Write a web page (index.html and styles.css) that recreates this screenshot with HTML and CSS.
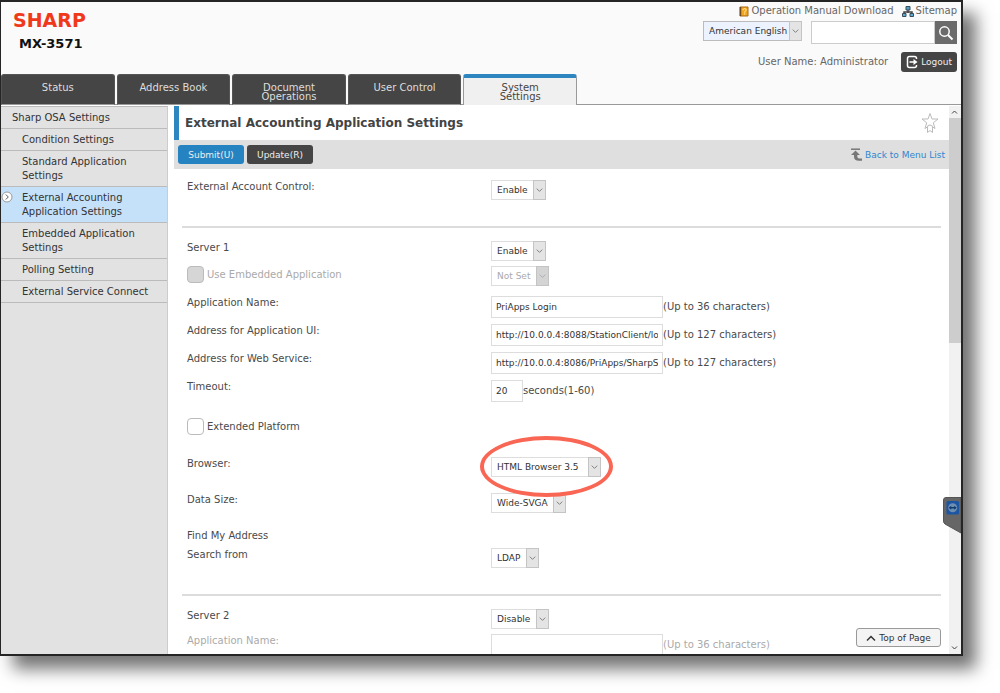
FILE: index.html
```html
<!DOCTYPE html>
<html lang="en">
<head>
<meta charset="utf-8">
<title>External Accounting Application Settings</title>
<link rel="stylesheet" href="styles.css">
</head>
<body>
<div class="window">
  <header class="header">
    <div class="masthead">
      <div class="brand">
        <div class="logo">SHARP</div>
        <div class="model">MX-3571</div>
      </div>
      <div class="tools">
        <div class="quick-links">
          <a href="#"><svg width="10" height="11" viewBox="0 0 10 11"><path d="M1 1h8v9H1z" fill="#f3a51c" stroke="#a86b18"/><path d="M1.500 1v9" stroke="#6d4a22" stroke-width="1.500"/><path d="M4 4.200c0-2 3.200-2 3.200-.2C7.200 5.200 5.600 5 5.600 6.600M5.600 7.500v1" fill="none" stroke="#fff3c4"/></svg>Operation Manual Download</a>
          <a href="#"><svg width="12" height="11" viewBox="0 0 12 11"><path d="M6 4v3M2 8V6h8v2" fill="none" stroke="#444" stroke-width="1.500"/><path d="M4 .5h4V4H4z" fill="#4f9cc4" stroke="#3b4c58"/><path d="M.5 7.500h3.500v3H.5zM8 7.500h3.500v3H8z" fill="#5aaed6" stroke="#3b4c58"/></svg>Sitemap</a>
        </div>
        <div class="search-row">
          <span class="select select-language"><select aria-label="Language"><option>American English</option></select><svg class="arrow" viewBox="0 0 12 18"><path d="M3 7.500l3 3 3-3"/></svg></span>
          <form class="search">
            <input type="text" aria-label="Search">
            <button type="button" aria-label="Search"><svg width="16" height="16" viewBox="0 0 16 16" fill="none" stroke="#fff"><circle cx="6.500" cy="6.500" r="4.700" stroke-width="1.500"/><path d="M10 10l4.500 4.500" stroke-width="2"/></svg></button>
          </form>
        </div>
        <div class="user-row">
          <span>User Name: Administrator</span>
          <button type="button" class="logout"><svg width="12" height="14" viewBox="0 0 12 14"><path d="M10.500 4V3.500Q10.500 1.500 8.500 1.500H3.500Q1.500 1.500 1.500 3.500v7q0 2 2 2h5q2 0 2-2V10" fill="none" stroke="#fff" stroke-width="1.500"/><path d="M3.500 6.200H7.500V4L11.500 7l-4 3V7.800h-4z" fill="#fff"/></svg>Logout</button>
        </div>
      </div>
    </div>
    <nav class="tabs">
      <a href="#">Status</a>
      <a href="#">Address Book</a>
      <a href="#">Document<br>Operations</a>
      <a href="#">User Control</a>
      <a href="#" class="active">System<br>Settings</a>
    </nav>
  </header>

  <div class="body">
    <nav class="sidebar">
      <a href="#" class="root">Sharp OSA Settings</a>
      <a href="#">Condition Settings</a>
      <a href="#">Standard Application Settings</a>
      <a href="#" class="current"><svg class="marker" width="12" height="12" viewBox="0 0 12 12"><circle cx="6" cy="6" r="5" fill="#fff" stroke="#999"/><path d="M4.800 3.500L7.300 6 4.800 8.500" fill="none" stroke="#555"/></svg>External Accounting Application Settings</a>
      <a href="#">Embedded Application Settings</a>
      <a href="#">Polling Setting</a>
      <a href="#">External Service Connect</a>
    </nav>

    <main class="content">
      <div class="title-bar">
        <h1>External Accounting Application Settings</h1>
        <svg width="18" height="22" viewBox="0 0 18 22" fill="#fff" stroke="#bbb"><path d="M9 1.500l2 5.500h6l-4.700 3.800 1.700 5.700L9 13.200l-5 3.300 1.700-5.700L1 7h6z"/><path d="M6.500 20.500V15q0-2 2.500-2t2.500 2v5.500L9 18.500z"/></svg>
      </div>
      <div class="toolbar">
        <button type="button" class="btn primary">Submit(U)</button>
        <button type="button" class="btn">Update(R)</button>
        <a href="#" class="back"><svg width="13" height="14" viewBox="0 0 13 14"><path d="M1 1.200h9" stroke="#777" stroke-width="1.500"/><path d="M5.500 2.500L10 7H7.300v1.500q0 2 2 2H12v2.300H9Q4 12.800 4 8.500V7H1z" fill="#777"/></svg>Back to Menu List</a>
      </div>

      <form class="form">
        <section class="section">
          <div class="row">
            <label for="control">External Account Control:</label>
            <span class="select"><select id="control"><option>Enable</option></select><svg class="arrow" viewBox="0 0 12 18"><path d="M3 7.500l3 3 3-3"/></svg></span>
          </div>
        </section>

        <section class="section">
          <div class="row">
            <label for="server1">Server 1</label>
            <span class="select"><select id="server1"><option>Enable</option></select><svg class="arrow" viewBox="0 0 12 18"><path d="M3 7.500l3 3 3-3"/></svg></span>
          </div>
          <div class="row near disabled">
            <label class="check"><input type="checkbox" disabled>Use Embedded Application</label>
            <span class="select"><select aria-label="Embedded application" disabled><option>Not Set</option></select><svg class="arrow" viewBox="0 0 12 18"><path d="M3 7.500l3 3 3-3"/></svg></span>
          </div>
          <div class="fields">
            <div class="row">
              <label for="name1">Application Name:</label>
              <span class="field"><input id="name1" type="text" value="PriApps Login">(Up to 36 characters)</span>
            </div>
            <div class="row">
              <label for="ui1">Address for Application UI:</label>
              <span class="field"><input id="ui1" type="text" value="http://10.0.0.4:8088/StationClient/login">(Up to 127 characters)</span>
            </div>
            <div class="row">
              <label for="ws1">Address for Web Service:</label>
              <span class="field"><input id="ws1" type="text" value="http://10.0.0.4:8086/PriApps/SharpService">(Up to 127 characters)</span>
            </div>
            <div class="row">
              <label for="timeout1">Timeout:</label>
              <span class="field"><input id="timeout1" class="short" type="text" value="20">seconds(1-60)</span>
            </div>
          </div>
          <div class="row far">
            <label class="check"><input type="checkbox">Extended Platform</label>
          </div>
          <div class="row farther">
            <label for="browser1">Browser:</label>
            <span class="select select-browser"><select id="browser1"><option>HTML Browser 3.5</option></select><svg class="arrow" viewBox="0 0 12 18"><path d="M3 7.500l3 3 3-3"/></svg><span class="highlight"></span></span>
          </div>
          <div class="row far">
            <label for="size1">Data Size:</label>
            <span class="select"><select id="size1"><option>Wide-SVGA</option></select><svg class="arrow" viewBox="0 0 12 18"><path d="M3 7.500l3 3 3-3"/></svg></span>
          </div>
          <div class="row far"><span>Find My Address</span></div>
          <div class="row near">
            <label for="from1">Search from</label>
            <span class="select"><select id="from1"><option>LDAP</option></select><svg class="arrow" viewBox="0 0 12 18"><path d="M3 7.500l3 3 3-3"/></svg></span>
          </div>
        </section>

        <section class="section">
          <div class="row">
            <label for="server2">Server 2</label>
            <span class="select"><select id="server2"><option>Disable</option></select><svg class="arrow" viewBox="0 0 12 18"><path d="M3 7.500l3 3 3-3"/></svg></span>
          </div>
          <div class="row near disabled">
            <label for="name2">Application Name:</label>
            <span class="field"><input id="name2" type="text" disabled>(Up to 36 characters)</span>
          </div>
        </section>
      </form>
      <button type="button" class="top"><svg width="10" height="8" viewBox="0 0 10 8"><path d="M1 6.500l4-4 4 4" fill="none" stroke="#333" stroke-width="1.500"/></svg>Top of Page</button>
    </main>

    <div class="scrollbar">
      <svg width="11" height="12" viewBox="0 0 11 12"><path d="M3 7.500L5.500 5 8 7.500"/></svg>
      <div class="thumb"></div>
      <svg width="11" height="12" viewBox="0 0 11 12"><path d="M3 4.500L5.500 7 8 4.500"/></svg>
    </div>
  </div>
  <svg class="remote" width="18" height="37" viewBox="0 0 18 37"><path d="M18 .5H3Q.5 .5 .5 3v21q0 2 1.500 3L18 36z" fill="#666" stroke="#555"/><rect x="3.500" y="4" width="12.500" height="13.500" rx="1.500" fill="#1b55a3"/><circle cx="9.700" cy="10.700" r="4.500" fill="#6f8fb0"/><path d="M5.700 10.700l2.500-2v1.300h3V8.700l2.500 2-2.500 2v-1.300h-3v1.300z" fill="#123a70"/></svg>
</div>
</body>
</html>
```
FILE: styles.css
```css
* { box-sizing: border-box; }

body {
  margin: 0;
  height: 100vh;
  padding: 0 37px 37px 0;
  background: #fff;
  color: #4a4a4a;
  font: 10px/14px "DejaVu Sans", sans-serif;
}

a { color: inherit; text-decoration: none; }

button, input, select {
  margin: 0;
  font: 9px/14px "DejaVu Sans", sans-serif;
  color: #333;
}

.window {
  position: relative;
  display: flex;
  flex-direction: column;
  height: 100%;
  overflow: hidden;
  background: #fff;
  border: 2px solid #252525;
  border-left-width: 1px;
  box-shadow: 13px 13px 16px rgba(0, 0, 0, 0.55);
}

/* Header */
.header {
  flex: none;
  background: #fafafa;
  border-bottom: 1px solid #999;
}

.masthead {
  display: flex;
  justify-content: space-between;
  height: 72px;
  padding: 2px 4px 0 12px;
}

.logo {
  padding-top: 6px;
  color: #f0391a;
  font-size: 19px;
  font-weight: bold;
  line-height: 20px;
}

.model {
  padding: 4px 0 0 6px;
  color: #111;
  font-size: 13px;
  font-weight: bold;
  line-height: 20px;
}

.tools {
  display: flex;
  flex-direction: column;
  align-items: flex-end;
  color: #666;
}

.quick-links { display: flex; gap: 8px; }
.quick-links a { display: flex; align-items: center; gap: 2px; }

.search-row { display: flex; gap: 9px; padding-top: 3px; }

.search { display: flex; height: 23px; }
.search input { width: 124px; border: 1px solid #ccc; background: #fff; }
.search button {
  display: grid;
  place-items: center;
  width: 22px;
  padding: 0;
  border: 0;
  background: #6b6b6b;
}

.user-row { display: flex; align-items: center; gap: 13px; padding-top: 8px; }

.logout {
  display: flex;
  align-items: center;
  gap: 3px;
  height: 20px;
  padding: 0 5px;
  border: 0;
  border-radius: 3px;
  background: #454545;
  color: #eee;
}

.tabs {
  display: grid;
  grid-template-columns: repeat(5, 1fr);
  gap: 2px;
  width: 60%;
  height: 31px;
  margin-bottom: -1px;
}

.tabs a {
  padding-top: 8px;
  border: 1px solid #555;
  border-bottom-color: #999;
  border-radius: 3px 3px 0 0;
  background: #454545;
  color: #ddd;
  line-height: 9px;
  text-align: center;
}

.tabs .active {
  padding-top: 5px;
  border: 1px solid #999;
  border-top: 4px solid #2e86c1;
  border-bottom: 0;
  background: #f0f0f0;
  color: #444;
}

/* Body */
.body {
  display: flex;
  flex: 1;
  min-height: 0;
  padding-top: 1px;
}

.sidebar {
  flex: none;
  width: 167px;
  border-top: 1px solid #bbb;
  border-right: 1px solid #ccc;
  background: #e2e2e2;
}

.sidebar a {
  position: relative;
  display: block;
  padding: 4px 20px 3px 21px;
  border-bottom: 1px solid #bbb;
  color: #333;
}

.sidebar a:last-child { padding-right: 0; }
.sidebar .root { padding-left: 11px; }
.sidebar .current { background: #c5e1fa; }
.marker { position: absolute; left: 0; top: 4px; }

.content {
  position: relative;
  flex: 1;
  min-width: 0;
  overflow: hidden;
  margin-left: 6px;
}

.title-bar {
  display: flex;
  align-items: center;
  justify-content: space-between;
  height: 34px;
  padding-right: 10px;
  border-left: 5px solid #2e86c1;
  padding-left: 6px;
}

.title-bar h1 { margin: 0; color: #444; font-size: 12px; line-height: 16px; }

.toolbar {
  display: flex;
  align-items: center;
  gap: 3px;
  height: 29px;
  padding: 0 4px;
  background: #dfdfdf;
}

.btn {
  width: 66px;
  height: 19px;
  padding: 0;
  border: 0;
  border-radius: 3px;
  background: #454545;
  color: #eee;
}

.btn.primary { background: #2583c2; }

.back {
  display: flex;
  align-items: center;
  gap: 2px;
  margin-left: auto;
  color: #2f86cf;
  font-size: 9px;
}

/* Form */
.form { padding: 0 8px; }
.section { padding: 13px 5px 26px; border-bottom: 2px solid #dcdcdc; }
.section:first-child { padding-top: 11px; }

.row { display: grid; grid-template-columns: 304px 1fr; align-items: start; }
.near { margin-top: 5px; }
.far { margin-top: 16px; }
.farther { margin-top: 22px; }
.fields { display: grid; gap: 6px; margin-top: 10px; }
.disabled, .disabled select, .disabled input { color: #aaa; }

.check { display: flex; align-items: center; gap: 3px; }
.check input {
  appearance: none;
  width: 17px;
  height: 17px;
  border: 1px solid #bbb;
  border-radius: 4px;
  background: #fff;
}
.check input:disabled { background: #d6d6d6; }

.field { display: flex; align-items: center; }
.field input {
  width: 172px;
  height: 22px;
  padding: 0 4px;
  border: 1px solid #ddd;
  background: #fff;
}
.field .short { width: 32px; }

.select { position: relative; justify-self: start; height: 20px; }
.select select {
  appearance: none;
  height: 20px;
  padding: 0 17px 0 5px;
  border: 1px solid #ddd;
  border-radius: 0;
  background: #fff;
  opacity: 1;
}
.select-language select {
  width: 99px;
  padding-right: 12px;
  border-color: #bbb;
  background: #edf3fe;
}
.select-browser select { width: 110px; }

.arrow {
  position: absolute;
  top: 0;
  right: 0;
  width: 13px;
  height: 20px;
  border: 1px solid #c4c4c4;
  background: #e4e4e4;
  fill: none;
  stroke: #777;
  pointer-events: none;
}
.disabled .arrow { background: #d4d4d4; stroke: #aaa; }

.highlight {
  position: absolute;
  z-index: 1;
  inset: -21px -12px -20px -11px;
  border: 4px solid #f96654;
  border-radius: 50%;
  pointer-events: none;
}

.top {
  position: absolute;
  right: 8px;
  bottom: 7px;
  display: flex;
  align-items: center;
  justify-content: center;
  gap: 3px;
  width: 85px;
  height: 19px;
  padding: 0;
  border: 1px solid #999;
  border-radius: 3px;
  background: #f4f4f4;
}

/* Scroll track */
.scrollbar {
  display: flex;
  flex-direction: column;
  flex: none;
  width: 12px;
  background: #f1f1f1;
}
.scrollbar svg { flex: none; fill: none; stroke: #444; }
.scrollbar svg:last-child { margin-top: auto; }
.thumb { height: 41%; background: #cdcdcd; }

.remote { position: absolute; right: 0; bottom: 120px; }
```
